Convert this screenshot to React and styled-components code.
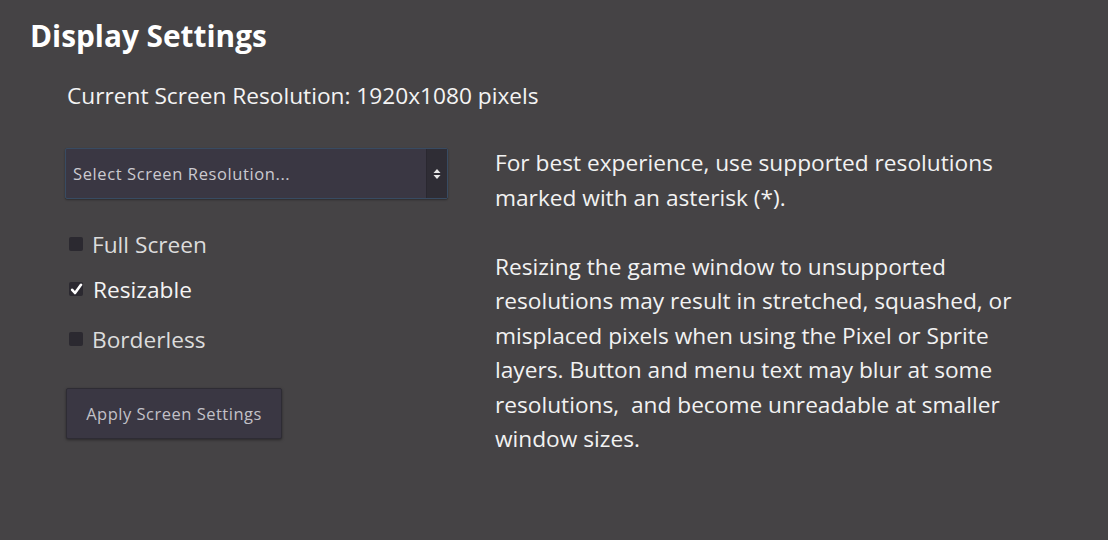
import React from "react";
import styled, { createGlobalStyle } from "styled-components";

const Global = createGlobalStyle`
  html, body { margin: 0; padding: 0; background: #454345; }
  body { font-family: "Open Sans", "Noto Sans", sans-serif; color: #f2f2f2; }
  #root { min-height: 540px; }
`;

const Page = styled.div`
  width: 1108px;
  height: 540px;
  box-sizing: border-box;
  padding: 16px 30px 0;
  background: #454345;
`;

const Title = styled.h1`
  margin: 0;
  font-size: 29.8px;
  font-weight: 700;
  line-height: 40px;
  color: #ffffff;
`;

const Body = styled.div`
  padding-left: 37px;
`;

const Current = styled.div`
  margin-top: 26px;
  font-size: 22.7px;
  line-height: 28px;
  color: #f4f4f4;
`;

const Columns = styled.div`
  display: flex;
  gap: 47px;
  margin-top: 38px;
`;

const Left = styled.div`
  width: 383px;
  display: flex;
  flex-direction: column;
  flex-shrink: 0;
  margin-left: -2px;
`;

const Select = styled.div`
  height: 51px;
  box-sizing: border-box;
  display: flex;
  align-items: stretch;
  border: 1px solid #384b62;
  border-radius: 2px;
  background: #3a3743;
  box-shadow: 0 1px 2px rgba(0, 0, 0, 0.35);
`;

const SelectText = styled.div`
  flex: 1;
  display: flex;
  align-items: center;
  padding-left: 7px;
  font-size: 16.5px;
  letter-spacing: 0.6px;
  color: #cbcad0;
`;

const SelectArrow = styled.div`
  width: 20px;
  display: flex;
  align-items: center;
  justify-content: center;
  background: #2f2d35;
  border-left: 1px solid #2a2830;
`;

const Checks = styled.div`
  display: flex;
  flex-direction: column;
  margin-top: 33px;
  padding-left: 4px;
`;

const CheckRow = styled.label`
  display: flex;
  align-items: center;
  gap: ${(p) => (p.$checked ? "10px" : "9px")};
  height: 24px;
  margin-bottom: ${(p) => p.$mb}px;
  font-size: 22.7px;
  color: ${(p) => (p.$checked ? "#f4f4f4" : "#dcdcdc")};
`;

const Box = styled.span`
  width: 14px;
  height: 14px;
  border-radius: 2px;
  background: #2b2930;
  display: flex;
  align-items: center;
  justify-content: center;
  flex-shrink: 0;
`;

const Button = styled.button`
  margin-top: 37px;
  margin-left: 1px;
  width: 216px;
  height: 51px;
  border: 1px solid #2e2c34;
  border-radius: 2px;
  background: #3a3743;
  box-shadow: 0 1px 3px rgba(0, 0, 0, 0.4);
  font-family: "Open Sans", "Noto Sans", sans-serif;
  font-size: 16.5px;
  letter-spacing: 0.5px;
  color: #c2c1c8;
  padding: 0;
`;

const Right = styled.div`
  width: 535px;
  font-size: 22.7px;
  line-height: 34.5px;
  color: #f2f2f2;
  margin-top: -2px;
`;

const Para = styled.p`
  margin: 0 0 34.5px;
  white-space: pre-wrap;
`;

function Arrows() {
  return (
    <svg width="8" height="12" viewBox="0 0 8 12">
      <path d="M4 1 L7.5 5 L0.5 5 Z" fill="#e8e8e8" />
      <path d="M4 11 L7.5 7 L0.5 7 Z" fill="#e8e8e8" />
    </svg>
  );
}

function Tick() {
  return (
    <svg width="13" height="13" viewBox="0 0 13 13">
      <path d="M2.2 6.8 L5 10 L11 1.8" stroke="#ffffff" strokeWidth="2.6" fill="none" strokeLinecap="round" strokeLinejoin="round" />
    </svg>
  );
}

function Check({ label, checked, mb }) {
  return (
    <CheckRow $checked={checked} $mb={mb}>
      <Box>{checked && <Tick />}</Box>
      {label}
    </CheckRow>
  );
}

export default function App() {
  return (
    <>
      <Global />
      <Page>
        <Title>Display Settings</Title>
        <Body>
          <Current>Current Screen Resolution: 1920x1080 pixels</Current>
          <Columns>
            <Left>
              <Select>
                <SelectText>Select Screen Resolution...</SelectText>
                <SelectArrow>
                  <Arrows />
                </SelectArrow>
              </Select>
              <Checks>
                <Check label="Full Screen" mb={21} />
                <Check label="Resizable" checked mb={26} />
                <Check label="Borderless" mb={0} />
              </Checks>
              <Button>Apply Screen Settings</Button>
            </Left>
            <Right>
              <Para>
                For best experience, use supported resolutions marked with an asterisk (*).
              </Para>
              <Para>
                {"Resizing the game window to unsupported resolutions may result in stretched, squashed, or misplaced pixels when using the Pixel or Sprite layers. Button and menu text may blur at some resolutions,  and become unreadable at smaller window sizes."}
              </Para>
            </Right>
          </Columns>
        </Body>
      </Page>
    </>
  );
}
